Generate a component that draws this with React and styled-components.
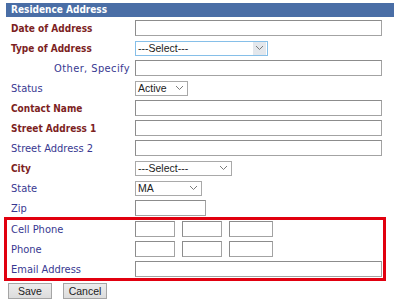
import React from 'react';
import styled, {createGlobalStyle, css} from 'styled-components';

const GlobalStyle = createGlobalStyle`
  body {
    margin: 0;
    background: #fff;
    font-family: "DejaVu Sans Condensed", "DejaVu Sans", Verdana, sans-serif;
  }
`;

const Chevron = () => (
  <svg width='9' height='6' viewBox='0 0 9 6'>
    <path d='M1 1 L4.5 4.5 L8 1' fill='none' stroke='#7a7a7a' strokeWidth='1'/>
  </svg>
);

const SelectField = ({width, value, focused}) => (
  <SelectWrap $width={width} $focused={focused}>
    <SelectValue>{value}</SelectValue>
    <ArrowBox $focused={focused}>
      <Chevron/>
    </ArrowBox>
  </SelectWrap>
);

const App = () => {
  return (
    <Page>
      <GlobalStyle/>
      <Header>Residence Address</Header>
      <Form>
        <Row>
          <Label $required>Date of Address</Label>
          <TextInput $width={247}/>
        </Row>
        <Row>
          <Label $required>Type of Address</Label>
          <SelectField width={133} value='---Select---' focused/>
        </Row>
        <Row>
          <Label $right>Other, Specify</Label>
          <TextInput $width={247}/>
        </Row>
        <Row>
          <Label>Status</Label>
          <SelectField width={53} value='Active'/>
        </Row>
        <Row>
          <Label $required>Contact Name</Label>
          <TextInput $width={247}/>
        </Row>
        <Row>
          <Label $required>Street Address 1</Label>
          <TextInput $width={247}/>
        </Row>
        <Row>
          <Label>Street Address 2</Label>
          <TextInput $width={247}/>
        </Row>
        <Row>
          <Label $required>City</Label>
          <SelectField width={97} value='---Select---'/>
        </Row>
        <Row>
          <Label>State</Label>
          <SelectField width={67} value='MA'/>
        </Row>
        <Row>
          <Label>Zip</Label>
          <TextInput $width={71}/>
        </Row>
        <Highlight>
          <Row>
            <Label>Cell Phone</Label>
            <PhoneGroup>
              <TextInput $width={40}/>
              <TextInput $width={40}/>
              <TextInput $width={44}/>
            </PhoneGroup>
          </Row>
          <Row>
            <Label>Phone</Label>
            <PhoneGroup>
              <TextInput $width={40}/>
              <TextInput $width={40}/>
              <TextInput $width={44}/>
            </PhoneGroup>
          </Row>
          <Row>
            <Label>Email Address</Label>
            <TextInput $width={247}/>
          </Row>
        </Highlight>
        <Buttons>
          <Button>Save</Button>
          <Button>Cancel</Button>
        </Buttons>
      </Form>
    </Page>
  );
};

const Page = styled.div`
    padding-top: 3px;
    width: 403px;
    height: 307px;
    box-sizing: border-box;
`;

const Header = styled.div`
    margin-left: 6px;
    width: 388px;
    height: 14px;
    box-sizing: border-box;
    padding-left: 5px;
    background: #4a6ea6;
    color: #fff;
    font-size: 10px;
    font-weight: bold;
    line-height: 14px;
`;

const Form = styled.div`
    margin-left: 6px;
    margin-top: 1px;
    width: 378px;
`;

const Row = styled.div`
    display: grid;
    grid-template-columns: 129px 1fr;
    align-items: center;
    height: 20px;
`;

const Label = styled.div`
    padding-left: 5px;
    padding-right: 5px;
    font-size: 11px;
    color: #383891;
    white-space: nowrap;
    ${p => p.$required && css`
        color: #7d1f1f;
        font-size: 10px;
        font-weight: bold;
    `}
    ${p => p.$right && css`
        text-align: right;
        letter-spacing: 0.4px;
    `}
`;

const TextInput = styled.div`
    width: ${p => p.$width}px;
    height: 16px;
    box-sizing: border-box;
    border: 1px solid #a3a3a3;
    border-top-color: #8c8c8c;
    border-left-color: #8c8c8c;
    background: #fff;
`;

const SelectWrap = styled.div`
    display: flex;
    align-items: center;
    width: ${p => p.$width}px;
    height: 15px;
    box-sizing: border-box;
    border: 1px solid ${p => p.$focused ? '#86bfe8' : '#a9a9a9'};
    background: #fff;
    font-family: "Liberation Sans", Arial, sans-serif;
    font-size: 10.5px;
    color: #222;
`;

const SelectValue = styled.span`
    flex: 1;
    padding-left: 2px;
    line-height: 13px;
    white-space: nowrap;
    overflow: hidden;
`;

const ArrowBox = styled.span`
    display: flex;
    align-items: center;
    justify-content: center;
    width: 13px;
    height: 100%;
    background: ${p => p.$focused ? '#e3e7ec' : 'transparent'};
    margin-right: 1px;
`;

const PhoneGroup = styled.div`
    display: flex;
    gap: 7px;
`;

const Highlight = styled.div`
    margin-top: 1px;
    outline: 3px solid #e1000f;
    outline-offset: -1px;
`;

const Buttons = styled.div`
    display: flex;
    gap: 11px;
    margin-top: 4px;
    margin-left: 2px;
`;

const Button = styled.button`
    width: 44px;
    height: 16px;
    padding: 0;
    box-sizing: border-box;
    border: 1px solid #a5a5a5;
    background: linear-gradient(#ececec, #dcdcdc);
    font-family: "Liberation Sans", Arial, sans-serif;
    font-size: 10.5px;
    line-height: 14px;
    color: #222;
`;

export default App;
